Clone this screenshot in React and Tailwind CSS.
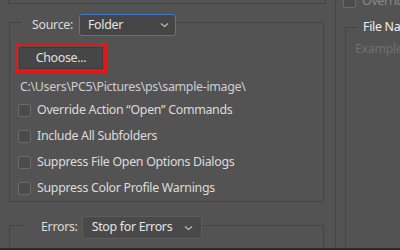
import React from "react";

function Check({ label, muted }) {
  return (
    <div className="flex items-center h-[26px] whitespace-nowrap">
      <span className="w-[13px] h-[13px] rounded-[2px] border border-[#6b6b6b] bg-[#4b4b4b] shrink-0" />
      <span className={"ml-[6px] " + (muted ? "text-[#8a8a8a]" : "text-[#dcdcdc]")}>{label}</span>
    </div>
  );
}

function Chevron() {
  return (
    <svg width="9" height="6" viewBox="0 0 9 6" className="shrink-0">
      <path d="M1 1.5 L4.5 4.5 L8 1.5" fill="none" stroke="#bdbdbd" strokeWidth="1.2" />
    </svg>
  );
}

export default function App() {
  return (
    <div
      className="w-[400px] h-[250px] bg-[#535353] overflow-hidden flex text-[12.4px] tracking-[-0.3px] text-[#dcdcdc] relative"
      style={{ fontFamily: '"Noto Sans", "Open Sans", sans-serif' }}
    >
      {/* left column */}
      <div className="w-[335px] shrink-0 flex flex-col">
        <div className="ml-[8px] w-[318px] h-[6px] border-l border-r border-b border-[#444444]" />

        <div className="ml-[9px] mt-[18px] w-[315px] h-[183px] border border-[#444444]">
          <div className="-mt-[9px] flex items-center pl-[11px]">
            <span className="bg-[#535353] pl-[11px] pr-[6px]">Source:</span>
            <div className="w-[97px] h-[22px] rounded-[3px] border border-[#3a7ad0] bg-[#454545] flex items-center justify-between pl-[8px] pr-[6px] text-[#e6e6e6]">
              <span>Folder</span>
              <Chevron />
            </div>
          </div>

          <div className="mt-[7px] ml-[5px] w-[92px] h-[30px] border-[3px] border-[#e21818] p-[1px]">
            <div className="w-full h-full bg-[#464646] border border-[#3c3c3c] flex items-center justify-center text-[#e0e0e0]">
              Choose...
            </div>
          </div>

          <div className="ml-[10px] mt-[5px] h-[18px] flex items-center text-[#cfcfcf] whitespace-nowrap">
            C:\Users\PC5\Pictures\ps\sample-image\
          </div>

          <div className="ml-[8px] mt-[1px] flex flex-col">
            <Check label="Override Action “Open” Commands" />
            <Check label="Include All Subfolders" />
            <Check label="Suppress File Open Options Dialogs" />
            <Check label="Suppress Color Profile Warnings" />
          </div>
        </div>

        <div className="ml-[9px] mt-[23px] w-[315px] h-[40px] border-l border-t border-r border-[#444444]">
          <div className="-mt-[10px] flex items-center pl-[14px]">
            <span className="bg-[#535353] pl-[17px] pr-[4px]">Errors:</span>
            <div className="w-[120px] h-[23px] rounded-[3px] border border-[#5c5c5c] bg-[#494949] flex items-center justify-between pl-[9px] pr-[8px] text-[#e6e6e6] whitespace-nowrap">
              <span>Stop for Errors</span>
              <Chevron />
            </div>
            <span className="bg-[#535353] w-[6px] h-[4px]" />
          </div>
        </div>
      </div>

      {/* right column */}
      <div className="flex-1 min-w-0 flex flex-col border-l border-[#464646] overflow-hidden">
        <div className="ml-[7px] -mt-[12px]">
          <Check label="Override Action “Open” Commands" muted />
        </div>
        <div className="ml-[9px] mt-[13px] flex-1 border-l border-t border-[#444444] whitespace-nowrap">
          <div className="-mt-[10px] pl-[12px]">
            <span className="bg-[#535353] px-[5px] text-[#f0f0f0]">File Name:</span>
          </div>
          <div className="ml-[9px] mt-[3px] text-[#707070]">Example: MyFile.gif</div>
        </div>
      </div>
      <div className="absolute left-0 top-[248px] w-[400px] h-[2px] bg-[#2a2a2a]" />
    </div>
  );
}
